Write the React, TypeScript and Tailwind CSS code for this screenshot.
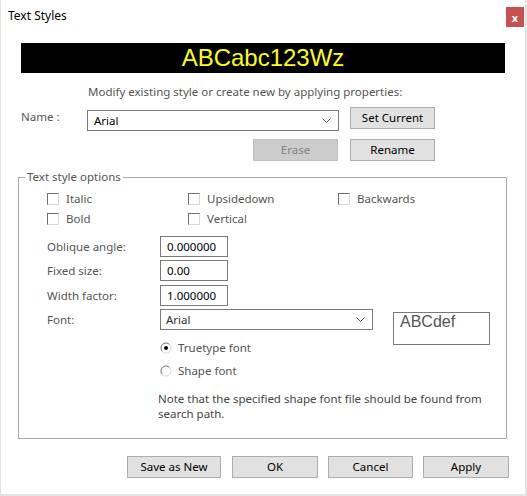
import React from "react";

const Chevron = () => (
  <svg width="9" height="5" viewBox="0 0 9 5" className="shrink-0">
    <polyline points="0.5,0.5 4.5,4.5 8.5,0.5" fill="none" stroke="#555555" strokeWidth="1" />
  </svg>
);

function Checkbox({ label }: { label: string }) {
  return (
    <div className="flex items-center gap-[7px] h-[20px]">
      <span className="w-[12px] h-[12px] border border-t-[#707070] border-l-[#707070] border-r-[#d9d9d9] border-b-[#d9d9d9] bg-white" />
      <span>{label}</span>
    </div>
  );
}

function Radio({ label, checked }: { label: string; checked?: boolean }) {
  return (
    <div className="flex items-center gap-[6px] h-[20px]">
      <svg width="12" height="12" viewBox="0 0 12 12" className="shrink-0">
        <path d="M2.46 9.54 A5 5 0 0 1 9.54 2.46" fill="none" stroke="#707070" strokeWidth="1" />
        <path d="M9.54 2.46 A5 5 0 0 1 2.46 9.54" fill="none" stroke="#d9d9d9" strokeWidth="1" />
        {checked && <circle cx="6" cy="6" r="2" fill="#000000" />}
      </svg>
      <span>{label}</span>
    </div>
  );
}

function Btn({ children, className = "", disabled }: { children: React.ReactNode; className?: string; disabled?: boolean }) {
  return (
    <div
      className={
        "h-[22px] flex items-center justify-center border " +
        (disabled
          ? "bg-[#cccccc] border-[#bfbfbf] text-[#838383] "
          : "bg-[#e1e1e1] border-[#adadad] text-black ") +
        className
      }
    >
      {children}
    </div>
  );
}

function Field({ label, value, top }: { label: string; value: string; top: string }) {
  return (
    <div className={"flex items-center h-[21px] " + top}>
      <div className="w-[113px]">{label}</div>
      <div className="w-[68px] h-[21px] border border-[#7a7a7a] flex items-center pl-[6px] text-black">{value}</div>
    </div>
  );
}

export default function App() {
  return (
    <div className="w-[527px] h-[496px] bg-white flex flex-col shadow-[inset_1px_0_0_#e3e3e3,inset_-2px_-2px_0_#e3e3e3] text-[11.5px] leading-[16px] text-[#555555] font-['Noto_Sans',sans-serif]">
      <div className="h-[43px] flex items-start justify-between">
        <div className="mt-[8px] ml-[8px] text-black text-[12px]">Text Styles</div>
        <div className="mt-[7px] mr-[3px] w-[18px] h-[20px] bg-[#c75050] text-white font-bold text-[11px] leading-none flex items-center justify-center">
          x
        </div>
      </div>

      <div className="ml-[21px] w-[484px] h-[30px] bg-black flex items-center justify-center text-[#ffff00] text-[24px] leading-none font-['Liberation_Sans',Arial,sans-serif]">
        ABCabc123Wz
      </div>

      <div className="mt-[11px] ml-[88px]">Modify existing style or create new by applying properties:</div>

      <div className="mt-[7px] flex items-start">
        <div className="ml-[21px] w-[66px] mt-[2px]">Name :</div>
        <div className="mt-[3px] w-[252px] h-[21px] border border-[#7a7a7a] flex items-center justify-between pl-[6px] pr-[7px] text-black">
          <span>Arial</span>
          <Chevron />
        </div>
        <Btn className="ml-[11px] w-[85px]">Set Current</Btn>
      </div>

      <div className="mt-[8px] flex">
        <Btn disabled className="ml-[253px] w-[85px]">Erase</Btn>
        <Btn className="ml-[12px] w-[85px]">Rename</Btn>
      </div>

      <div className="mt-[16px] ml-[18px] w-[489px] h-[262px] border border-[#a9a9a9] relative">
        <span className="absolute left-[6px] top-[-9px] bg-white px-[2px]">Text style options</span>

        <div className="ml-[28px] mt-[11px] grid grid-cols-[141px_150px_auto]">
          <Checkbox label="Italic" />
          <Checkbox label="Upsidedown" />
          <Checkbox label="Backwards" />
          <Checkbox label="Bold" />
          <Checkbox label="Vertical" />
        </div>

        <div className="ml-[28px] mt-[7px]">
          <Field label="Oblique angle:" value="0.000000" top="" />
          <Field label="Fixed size:" value="0.00" top="mt-[3px]" />
          <Field label="Width factor:" value="1.000000" top="mt-[4px]" />
        </div>

        <div className="ml-[28px] mt-[3px] grid grid-cols-[113px_213px_20px_97px] items-start">
          <div className="h-[21px] flex items-center">Font:</div>
          <div className="h-[21px] border border-[#7a7a7a] flex items-center justify-between pl-[5px] pr-[7px] text-[#303030]">
            <span>Arial</span>
            <Chevron />
          </div>
          <div />
          <div className="row-span-2 mt-[3px] h-[33px] border border-[#7a7a7a] pl-[6px] text-[16px] leading-[18px] text-[#555555] font-['Liberation_Sans',Arial,sans-serif]">
            ABCdef
          </div>
          <div />
          <div className="pt-[8px] flex flex-col gap-[3px]">
            <Radio label="Truetype font" checked />
            <Radio label="Shape font" />
          </div>
          <div />
          <div className="col-start-2 col-span-3 ml-[-2px] mt-[10px] leading-[15px] whitespace-nowrap text-[#454545]">
            <div>Note that the specified shape font file should be found from</div>
            <div>search path.</div>
          </div>
        </div>
      </div>

      <div className="mt-[17px] flex">
        <Btn className="ml-[127px] w-[94px]">Save as New</Btn>
        <Btn className="ml-[11px] w-[86px]">OK</Btn>
        <Btn className="ml-[10px] w-[85px]">Cancel</Btn>
        <Btn className="ml-[10px] w-[86px]">Apply</Btn>
      </div>
    </div>
  );
}
